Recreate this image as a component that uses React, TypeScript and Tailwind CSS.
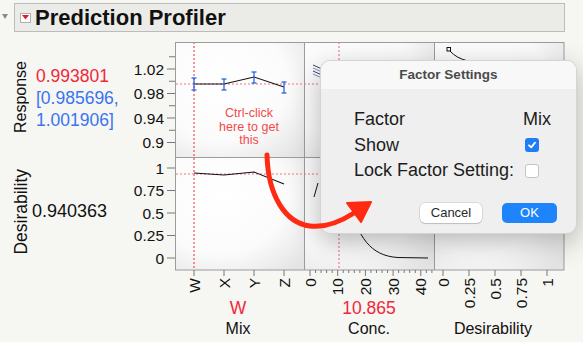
import React from "react";

const RESP_TICKS = [
  { v: "1.02", y: 69 },
  { v: "0.98", y: 93.5 },
  { v: "0.94", y: 118 },
  { v: "0.9", y: 142.5 },
];
const RESP_MINOR = [56.75, 81.25, 105.75, 130.25];

const DES_TICKS = [
  { v: "1", y: 168 },
  { v: "0.75", y: 190.5 },
  { v: "0.5", y: 213 },
  { v: "0.25", y: 235.5 },
  { v: "0", y: 258 },
];

const MIX_X = [
  { v: "W", x: 194 },
  { v: "X", x: 224 },
  { v: "Y", x: 254 },
  { v: "Z", x: 284 },
];
const CONC_X = [
  { v: "0", x: 310 },
  { v: "10", x: 337.7 },
  { v: "20", x: 365.4 },
  { v: "30", x: 393.1 },
  { v: "40", x: 420.8 },
];
const DES_X = [
  { v: "0", x: 443 },
  { v: "0.25", x: 469 },
  { v: "0.5", x: 495 },
  { v: "0.75", x: 521 },
  { v: "1", x: 547 },
];

// mean and error bar (top, bottom) per Mix level
const MIX_POINTS = [
  { x: 194, y: 84, lo: 78, hi: 90 },
  { x: 224, y: 84, lo: 79, hi: 90 },
  { x: 254, y: 77, lo: 72, hi: 83 },
  { x: 284, y: 87, lo: 82, hi: 93 },
];

function ProfilerChart() {
  const concMinor: number[] = [];
  for (let i = 0; i <= 22; i++) concMinor.push(310 + i * 5.54);

  return (
    <svg
      width={423}
      height={258}
      viewBox="160 40 423 258"
      className="overflow-visible"
      style={{ fontFamily: '"Liberation Sans", Arial, sans-serif' }}
    >
      <defs>
        <radialGradient id="panel" cx="35%" cy="35%" r="85%">
          <stop offset="0%" stopColor="#ffffff" />
          <stop offset="60%" stopColor="#fbfbfb" />
          <stop offset="100%" stopColor="#e4e4e4" />
        </radialGradient>
      </defs>

      {/* panels */}
      {[175, 304, 434].map((x) =>
        [42, 157].map((y) => (
          <rect key={`${x}-${y}`} x={x} y={y} width={x === 434 ? 130 : 130} height={y === 42 ? 115 : 113} fill="url(#panel)" />
        ))
      )}

      {/* reference lines */}
      <line x1={194} y1={42} x2={194} y2={270} stroke="#e8283a" strokeWidth={1} strokeDasharray="2 2" />
      <line x1={339} y1={42} x2={339} y2={270} stroke="#f08090" strokeWidth={1.2} strokeDasharray="2 2" />
      <line x1={176} y1={84} x2={433} y2={84} stroke="#f5a0a8" strokeWidth={1.6} strokeDasharray="2 2" />
      <line x1={176} y1={174} x2={433} y2={174} stroke="#f5a0a8" strokeWidth={1.6} strokeDasharray="2 2" />

      {/* mix response curve */}
      <polyline
        points={MIX_POINTS.map((p) => `${p.x},${p.y}`).join(" ")}
        fill="none"
        stroke="#111"
        strokeWidth={1.1}
      />
      {MIX_POINTS.map((p) => (
        <g key={p.x} stroke="#2a63e6" strokeWidth={1.3}>
          <line x1={p.x} y1={p.lo} x2={p.x} y2={p.hi} />
          <line x1={p.x - 2.5} y1={p.lo} x2={p.x + 2.5} y2={p.lo} />
          <line x1={p.x - 2.5} y1={p.hi} x2={p.x + 2.5} y2={p.hi} />
        </g>
      ))}

      {/* mix desirability curve */}
      <polyline points="194,173 224,175 254,172 284,184" fill="none" stroke="#111" strokeWidth={1.1} />

      {/* conc response curve fragment */}
      <path d="M313,65 L322,69" stroke="#444" strokeWidth={1} />
      <path d="M313,68 L322,72" stroke="#6a8ee8" strokeWidth={1} />
      <path d="M313,71 L322,75" stroke="#444" strokeWidth={1} />
      <path d="M313,74 L322,78" stroke="#6a8ee8" strokeWidth={1} />

      {/* conc desirability curve */}
      <path d="M314,197 L318,183" stroke="#111" strokeWidth={1} fill="none" />
      <path d="M350,205 C358,236 370,256 398,257.5 L428,258" stroke="#111" strokeWidth={1} fill="none" />

      {/* desirability function fragment */}
      <rect x={447} y={47.5} width={3.5} height={3.5} fill="#fff" stroke="#111" strokeWidth={1} />
      <path d="M450,51 Q456,58 468,61" stroke="#111" strokeWidth={1} fill="none" />

      {/* frame */}
      <rect x={175.5} y={42.5} width={388.5} height={227.5} fill="none" stroke="#9c9c9c" strokeWidth={1} />
      <line x1={304.5} y1={42} x2={304.5} y2={270} stroke="#9c9c9c" />
      <line x1={434.5} y1={42} x2={434.5} y2={270} stroke="#9c9c9c" />
      <line x1={175} y1={157.5} x2={564} y2={157.5} stroke="#9c9c9c" />

      {/* y axes */}
      <g stroke="#777" strokeWidth={1}>
        {RESP_TICKS.map((t) => (
          <line key={t.v} x1={167} y1={t.y} x2={175} y2={t.y} />
        ))}
        {RESP_MINOR.map((y) => (
          <line key={y} x1={169} y1={y} x2={175} y2={y} />
        ))}
        {DES_TICKS.map((t) => (
          <line key={t.v} x1={167} y1={t.y} x2={175} y2={t.y} />
        ))}
      </g>
      <g fontSize={15.5} fill="#111" textAnchor="end">
        {[...RESP_TICKS, ...DES_TICKS].map((t) => (
          <text key={t.v + t.y} x={164} y={t.y + 5.5}>
            {t.v}
          </text>
        ))}
      </g>

      {/* x axes */}
      <g stroke="#777" strokeWidth={1}>
        {MIX_X.map((t) => (
          <line key={t.v} x1={t.x} y1={270} x2={t.x} y2={276} />
        ))}
        {concMinor.map((x, i) => (
          <line key={x} x1={x} y1={270} x2={x} y2={i % 5 === 0 ? 276 : 273} />
        ))}
        {DES_X.map((t) => (
          <line key={t.v} x1={t.x} y1={270} x2={t.x} y2={276} />
        ))}
      </g>
      <g fontSize={15.5} fill="#111" textAnchor="end">
        {[...MIX_X, ...CONC_X, ...DES_X].map((t) => (
          <text key={t.v + t.x} x={t.x + 5.5} y={278} transform={`rotate(-90 ${t.x + 5.5} 278)`}>
            {t.v}
          </text>
        ))}
      </g>

      {/* annotation */}
      <g fontSize={12.5} fill="#f24a4a" textAnchor="middle">
        <text x={249} y={117}>Ctrl-click</text>
        <text x={249} y={130.5}>here to get</text>
        <text x={249} y={144}>this</text>
      </g>
    </svg>
  );
}

function FactorSettings() {
  return (
    <div className="absolute left-[320px] top-[60px] w-[257px] h-[174px] rounded-[10px] bg-[#efefef] border border-[#d4d4d4] shadow-[0_8px_28px_rgba(0,0,0,0.28)] overflow-hidden flex flex-col">
      <div className="h-[28px] bg-[#f8f8f8] flex items-center justify-center text-[13.5px] font-bold text-[#4a4a4a]">
        Factor Settings
      </div>
      <div className="pl-[33px] pt-[18px] grid grid-cols-[169px_1fr] text-[18px] text-[#1c1c1c] leading-[25.5px]">
        <div>Factor</div>
        <div>Mix</div>
        <div>Show</div>
        <div className="flex items-center pl-[2px]">
          <span className="w-[14px] h-[14px] rounded-[3px] bg-[#1f7df5] flex items-center justify-center">
            <svg width="10" height="10" viewBox="0 0 10 10">
              <path d="M2 5.3 L4.2 7.4 L8 2.6" fill="none" stroke="#fff" strokeWidth="1.8" strokeLinecap="round" strokeLinejoin="round" />
            </svg>
          </span>
        </div>
        <div>Lock Factor Setting:</div>
        <div className="flex items-center pl-[2px]">
          <span className="w-[14px] h-[14px] rounded-[3px] bg-white border border-[#c4c4c4]" />
        </div>
      </div>
      <div className="mt-auto mb-[10px] pr-[19px] flex justify-end gap-[20px] text-[13px]">
        <button className="w-[62px] h-[20px] rounded-[5px] bg-white text-[#2a2a2a] shadow-[0_0_0_0.5px_rgba(0,0,0,0.18),0_1px_1px_rgba(0,0,0,0.12)]">
          Cancel
        </button>
        <button className="w-[55px] h-[20px] rounded-[5px] bg-[#1d84fb] text-white">OK</button>
      </div>
    </div>
  );
}

export default function App() {
  return (
    <div className="relative w-[583px] h-[342px] overflow-hidden bg-[#f6f6f2] font-['Liberation_Sans',Arial,sans-serif] text-[#111]">
      {/* header */}
      <div className="h-[40px] flex items-start pt-[3px] pl-[2px]">
        <svg width="6" height="6" viewBox="0 0 6 6" className="mt-[11px]">
          <path d="M0 0 L6 0 L3 5 Z" fill="#8a8a8a" />
        </svg>
        <div className="ml-[6px] mr-[18px] flex-1 h-[29px] border border-[#bcbcbc] bg-[#ebebe8] flex items-center pl-[5px] gap-[4px]">
          <span className="w-[11px] h-[10px] border border-[#b0b0b0] bg-white flex items-center justify-center">
            <svg width="7" height="5" viewBox="0 0 7 5">
              <path d="M0 0 L7 0 L3.5 4.5 Z" fill="#e01e1e" />
            </svg>
          </span>
          <span className="text-[22px] font-bold leading-none text-[#111]">Prediction Profiler</span>
        </div>
      </div>

      {/* profiler body */}
      <div className="flex h-[258px]">
        <div className="w-[160px] flex flex-col pl-[12px]">
          <div className="h-[115px] flex items-center">
            <div className="w-[18px] flex justify-center">
              <span className="[writing-mode:vertical-rl] rotate-180 text-[16px]">Response</span>
            </div>
            <div className="ml-[6px] text-[17.5px] leading-[22px]">
              <div className="text-[#f0283c]">0.993801</div>
              <div className="text-[#3a74f0]">[0.985696,</div>
              <div className="text-[#3a74f0]">1.001906]</div>
            </div>
          </div>
          <div className="h-[113px] flex items-center">
            <div className="w-[18px] flex justify-center">
              <span className="[writing-mode:vertical-rl] rotate-180 text-[17.5px]">Desirability</span>
            </div>
            <div className="ml-[2px] text-[18px]">0.940363</div>
          </div>
        </div>
        <ProfilerChart />
      </div>

      {/* factor labels */}
      <div className="pl-[175px]">
        <div className="flex h-[20px] leading-[20px] text-[17.5px] text-[#f0283c]">
          <div className="w-[126px] text-center">W</div>
          <div className="w-[136px] text-center">10.865</div>
        </div>
        <div className="flex h-[22px] leading-[22px] text-[16px]">
          <div className="w-[126px] text-center">Mix</div>
          <div className="w-[136px] text-center">Conc.</div>
          <div className="w-[112px] text-center">Desirability</div>
        </div>
      </div>

      <FactorSettings />

      {/* hand-drawn arrow */}
      <svg className="absolute left-0 top-0 pointer-events-none" width={583} height={342}>
        <path
          d="M267,155 C268,195 285,223 310,226 C326,228 340,222 354,213"
          fill="none"
          stroke="#ff2a12"
          strokeWidth={5}
          strokeLinecap="round"
        />
        <polygon points="347,203 371,202 361,222" fill="#ff2a12" stroke="#ff2a12" strokeWidth={2} strokeLinejoin="round" />
      </svg>
    </div>
  );
}
